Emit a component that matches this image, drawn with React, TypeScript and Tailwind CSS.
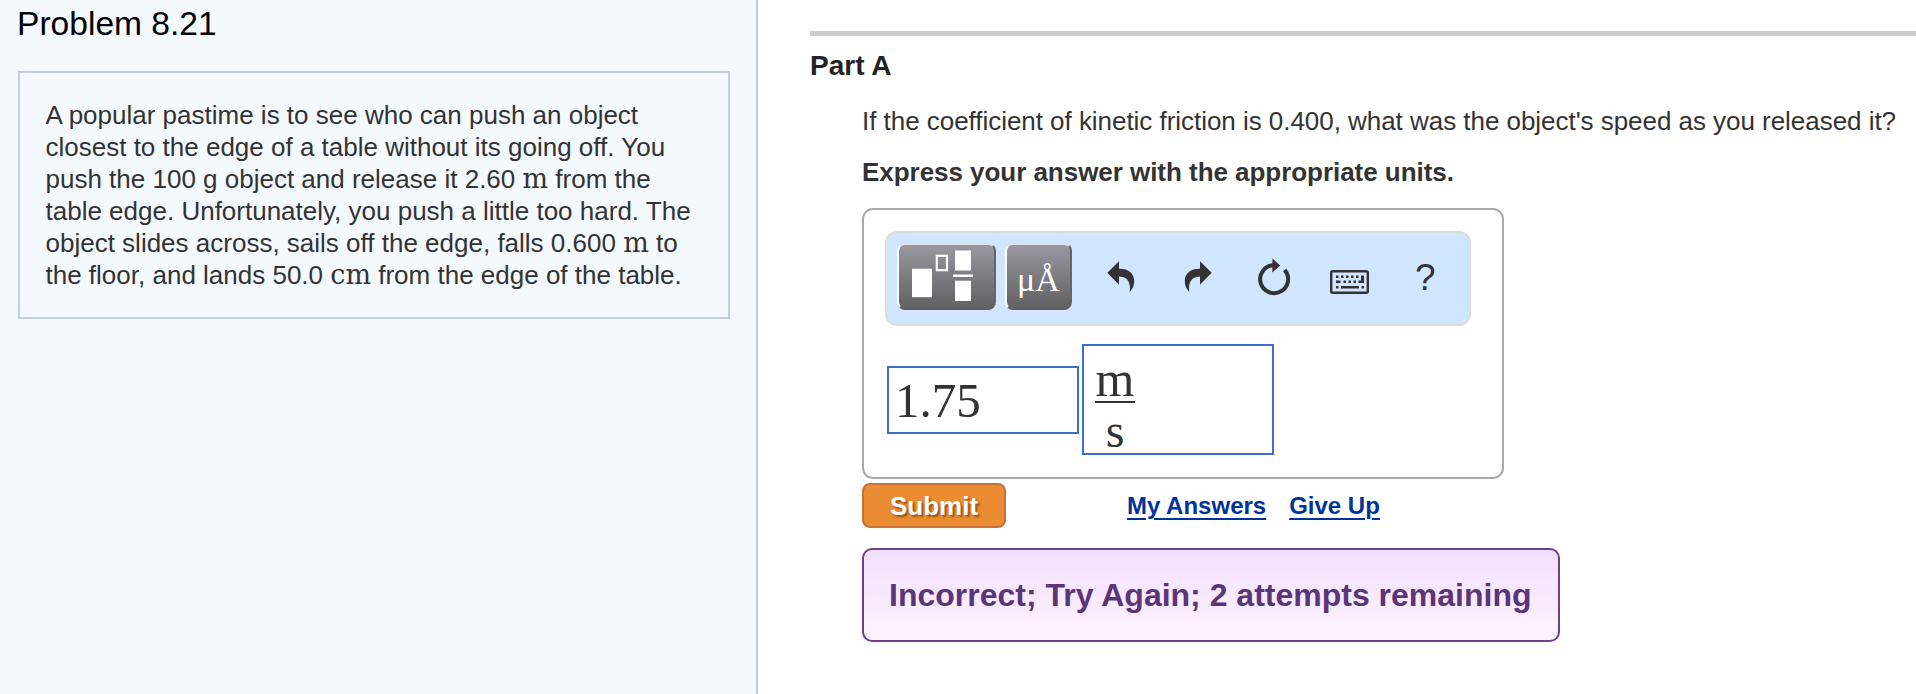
import type { SVGProps } from "react";

function TemplatesIcon(props: SVGProps<SVGSVGElement>) {
  return (
    <svg viewBox="0 0 99 67" fill="#fff" {...props}>
      <rect x="16" y="25.7" width="20" height="28.5" />
      <rect x="40.8" y="12.8" width="10.2" height="14.4" fill="none" stroke="#fff" strokeWidth="2.2" />
      <rect x="59" y="7.5" width="16" height="20" />
      <rect x="57" y="31.5" width="20" height="2.5" />
      <rect x="59" y="37.7" width="16" height="20.3" />
    </svg>
  );
}

function UndoIcon(props: SVGProps<SVGSVGElement>) {
  return (
    <svg viewBox="0 0 28 32" fill="#333" {...props}>
      <path d="M0.3 11.8 12 .2V7.8C21 7.6 27.2 12 27.2 20C27.2 25 25.5 28 22.6 31.3C24 23 21.5 15.8 12 15.6V23.8Z" />
    </svg>
  );
}

function ResetIcon(props: SVGProps<SVGSVGElement>) {
  return (
    <svg viewBox="0 0 34 38" fill="none" {...props}>
      <path d="M28.6 11.8A14 14 0 1 1 17 7.2" stroke="#333" strokeWidth="4" />
      <path d="M16.4 .4 24.2 7.6 16.4 14.6Z" fill="#333" />
    </svg>
  );
}

function KeyboardIcon(props: SVGProps<SVGSVGElement>) {
  return (
    <svg viewBox="0 0 39 24" fill="#333" {...props}>
      <rect x="1.2" y="1.2" width="36.6" height="21.6" rx="1.5" fill="none" stroke="#333" strokeWidth="2.4" />
      <path d="M6 5.5h2.5V8H6zM11 5.5h2.5V8H11zM16 5.5h2.5V8H16zM21 5.5h2.5V8H21zM26 5.5h2.5V8H26z" />
      <path d="M6 10.5h4.5V13H6zM13.5 10.5H16V13h-2.5zM18.5 10.5H21V13h-2.5zM23.5 10.5H26V13h-2.5zM31 5.5h3V13h-5.5v-2.5H31z" />
      <path d="M6 16h2.5v2.5H6zM11 16h18v2.5H11zM31.5 16H34v2.5h-2.5z" />
    </svg>
  );
}

function Unit({ children }: { children: string }) {
  return <span className="font-['DejaVu_Serif',serif] text-[27px] leading-[0px]">{children}</span>;
}

const PROBLEM_LINES = [
  <>A popular pastime is to see who can push an object</>,
  <>closest to the edge of a table without its going off. You</>,
  <>push the 100 g object and release it 2.60 <Unit>m</Unit> from the</>,
  <>table edge. Unfortunately, you push a little too hard. The</>,
  <>object slides across, sails off the edge, falls 0.600 <Unit>m</Unit> to</>,
  <>the floor, and lands 50.0 <Unit>cm</Unit> from the edge of the table.</>,
];

export default function App() {
  return (
    <div className="flex h-[694px] w-[1916px] overflow-hidden bg-white font-['Liberation_Sans',Arial,sans-serif] text-[26px] leading-8 text-[#333]">
      {/* Problem statement */}
      <aside className="w-[758px] shrink-0 border-r-2 border-[#bccde0] bg-[#f4f8ff] pl-[18px]">
        <h1 className="-ml-px mt-1 h-[67px] text-[33.6px] leading-[39px] text-black">Problem 8.21</h1>
        <div className="h-[248px] w-[712px] border-2 border-[#bfcfdf] pl-[25.5px] pt-[26px]">
          {PROBLEM_LINES.map((line, i) => (
            <p key={i} className="h-8 whitespace-nowrap">{line}</p>
          ))}
        </div>
      </aside>

      <main className="flex-1 pl-[52px] pt-[31px]">
        <hr className="h-[5px] border-0 bg-[#ccc]" />
        <h2 className="mt-[14px] text-[28px] font-bold leading-8 text-[#222]">Part A</h2>

        <div className="pl-[52px]">
          <p className="mt-[23px] whitespace-nowrap tracking-[-0.04px]">
            If the coefficient of kinetic friction is 0.400, what was the object's speed as you released it?
          </p>
          <p className="mt-[19px] whitespace-nowrap font-bold tracking-[-0.04px]">Express your answer with the appropriate units.</p>

          {/* Answer editor */}
          <div className="mt-5 h-[271px] w-[642px] rounded-[11px] border-2 border-[#aaa] pl-[21px] pt-[21px]">
            <div className="flex h-[95px] w-[586px] rounded-xl border-2 border-[#ddd] bg-[#d0e5ff] pl-[10px] pt-[10px]">
              <button className="h-[67px] w-[99px] rounded-lg border-2 border-b-[#606060] border-l-white border-r-[#666] border-t-white/70 bg-linear-to-b from-[#9b99a3] to-[#606060] bg-origin-border">
                <TemplatesIcon className="-ml-[3px] -mt-0.5 h-[67px] w-[99px]" />
              </button>
              <button className="ml-[9px] h-[67px] w-[67px] rounded-lg border-2 border-b-[#606060] border-l-white border-r-[#666] border-t-white/70 bg-linear-to-b from-[#9b99a3] to-[#606060] bg-origin-border pt-[7px] font-['Liberation_Serif',serif] text-[34px] leading-8 text-white">
                μÅ
              </button>
              <UndoIcon className="ml-[35px] mt-[18px] h-8 w-7" />
              <UndoIcon className="ml-[49px] mt-[18px] h-8 w-7 -scale-x-100" />
              <ResetIcon className="ml-[44px] mt-[15px] h-[38px] w-[34px]" />
              <KeyboardIcon className="ml-[40px] mt-[27px] h-6 w-[39px]" />
              <button className="ml-[46px] mt-[17px] h-9 text-[37px] leading-9">?</button>
            </div>

            <div className="ml-0.5 mt-[18px] flex items-center font-['Liberation_Serif',serif] text-[50px]">
              <div className="h-[68px] w-[192px] border-2 border-[#3a6fd0] pl-[6px] text-[49px] leading-[66px]">1.75</div>
              <div className="ml-[3px] h-[111px] w-[192px] border-2 border-[#3a6fd0] pl-[11px] pt-[8px]">
                <div className="flex w-10 flex-col items-center">
                  <span className="h-[47px] leading-[50px]">m</span>
                  <span className="h-[2px] w-10 bg-[#333]" />
                  <span className="text-[48px] leading-[55px]">s</span>
                </div>
              </div>
            </div>
          </div>

          <div className="mt-1 flex h-[45px]">
            <button className="h-[45px] w-36 rounded-lg border-2 border-[#c87038] bg-[#ea8c31] text-center font-bold text-white [text-shadow:2px_2px_2px_rgba(110,40,0,0.6)]">
              Submit
            </button>
            <div className="ml-[121px] flex gap-[23px] pt-[7px] text-[24px] font-bold text-[#003399]">
              <a href="#" className="underline decoration-2 underline-offset-[4px]">My Answers</a>
              <a href="#" className="underline decoration-2 underline-offset-[4px]">Give Up</a>
            </div>
          </div>

          <div className="mt-5 h-[94px] w-[698px] whitespace-nowrap rounded-[10px] border-2 border-[#6f3f8c] bg-linear-to-b from-[#f1dfff] to-[#fff3ff] pl-[25px] pt-[25px] text-[32px] font-bold leading-10 text-[#5a3577]">
            Incorrect; Try Again; 2 attempts remaining
          </div>
        </div>
      </main>
    </div>
  );
}
